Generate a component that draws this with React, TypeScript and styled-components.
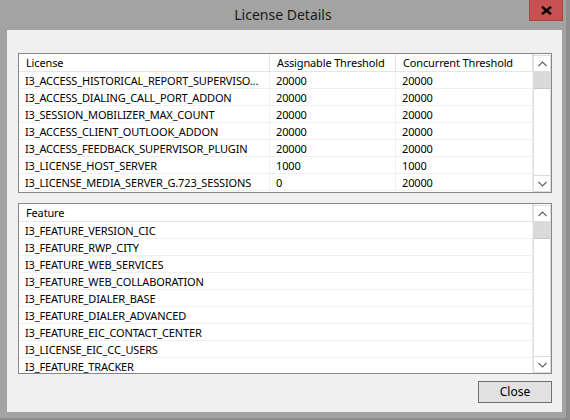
import styled, { createGlobalStyle } from "styled-components";

const GlobalStyle = createGlobalStyle`
    html, body {
        margin: 0;
        padding: 0;
        background: #a3a3a3;
    }
    * {
        box-sizing: border-box;
    }
`;

const Window = styled.div`
    width: 570px;
    height: 420px;
    background: #a3a3a3;
    display: flex;
    flex-direction: column;
    font-family: "Noto Sans", "Open Sans", sans-serif;
    color: #000;
    border-right: 4px solid #8e8e8e;
    border-bottom: 2px solid #8e8e8e;
`;

const TitleBar = styled.div`
    height: 30px;
    display: grid;
    grid-template-columns: 1fr auto 1fr;
    align-items: start;
`;

const Title = styled.div`
    grid-column: 2;
    font-size: 14px;
    line-height: 30px;
    color: #1a1a1a;
`;

const CloseX = styled.div`
    grid-column: 3;
    justify-self: end;
    width: 34px;
    height: 21px;
    margin-right: 3px;
    background: #c75050;
    border: 1px solid #a84040;
    border-top: none;
    display: flex;
    align-items: center;
    justify-content: center;
`;

const Client = styled.div`
    margin-left: 7px;
    width: 555px;
    height: 382px;
    background: #f0f0f0;
    padding: 23px 10px 9px 11px;
    display: flex;
    flex-direction: column;
`;

const ListView = styled.div<{ $height: number }>`
    height: ${(p) => p.$height}px;
    border: 1px solid #828790;
    background: #fff;
    display: grid;
    grid-template-columns: 1fr 18px;
    overflow: hidden;
`;

const Rows = styled.div`
    overflow: hidden;
    font-size: 11px;
    letter-spacing: -0.15px;
`;

const Row = styled.div<{ $cols: string; $header?: boolean }>`
    display: grid;
    grid-template-columns: ${(p) => p.$cols};
    height: ${(p) => (p.$header ? 18 : 17)}px;
    border-bottom: 1px solid ${(p) => (p.$header ? "#e5e5e5" : "#f0f0f0")};
`;

const Cell = styled.div<{ $header?: boolean }>`
    padding-left: ${(p) => (p.$header ? 7 : 6)}px;
    padding-top: 1px;
    line-height: 16px;
    white-space: nowrap;
    overflow: hidden;
    border-right: 1px solid ${(p) => (p.$header ? "#e5e5e5" : "#f0f0f0")};
    color: #000;
`;

const ScrollBar = styled.div`
    display: flex;
    flex-direction: column;
    background: #fff;
    border-left: 1px solid #dcdcdc;
    padding-top: 1px;
`;

const ScrollButton = styled.div`
    height: 17px;
    border: 1px solid #dcdcdc;
    border-left: none;
    display: flex;
    align-items: center;
    justify-content: center;
    background: #fff;
`;

const Track = styled.div`
    flex: 1;
    background: #fff;
    border-right: 1px solid #dcdcdc;
`;

const Thumb = styled.div`
    height: 17px;
    background: #dadada;
    border-bottom: 1px solid #c8c8c8;
`;

const Spacer = styled.div<{ $h: number }>`
    height: ${(p) => p.$h}px;
    flex: none;
`;

const Footer = styled.div`
    display: flex;
    justify-content: flex-end;
`;

const Button = styled.button`
    width: 74px;
    height: 22px;
    border: 1px solid #707070;
    background: #e1e1e1;
    font-family: "Noto Sans", "Open Sans", sans-serif;
    font-size: 12px;
    color: #000;
    padding: 0;
    line-height: 18px;
`;

const Chevron = ({ up }: { up?: boolean }) => (
    <svg width="9" height="6" viewBox="0 0 9 6">
        <polyline
            points={up ? "0.5,5 4.5,1 8.5,5" : "0.5,1 4.5,5 8.5,1"}
            fill="none"
            stroke="#606060"
            strokeWidth="1.1"
        />
    </svg>
);

const Scroll = () => (
    <ScrollBar>
        <ScrollButton>
            <Chevron up />
        </ScrollButton>
        <Track>
            <Thumb />
        </Track>
        <ScrollButton>
            <Chevron />
        </ScrollButton>
    </ScrollBar>
);

const licenses = [
    ["I3_ACCESS_HISTORICAL_REPORT_SUPERVISO...", "20000", "20000"],
    ["I3_ACCESS_DIALING_CALL_PORT_ADDON", "20000", "20000"],
    ["I3_SESSION_MOBILIZER_MAX_COUNT", "20000", "20000"],
    ["I3_ACCESS_CLIENT_OUTLOOK_ADDON", "20000", "20000"],
    ["I3_ACCESS_FEEDBACK_SUPERVISOR_PLUGIN", "20000", "20000"],
    ["I3_LICENSE_HOST_SERVER", "1000", "1000"],
    ["I3_LICENSE_MEDIA_SERVER_G.723_SESSIONS", "0", "20000"],
];

const features = [
    "I3_FEATURE_VERSION_CIC",
    "I3_FEATURE_RWP_CITY",
    "I3_FEATURE_WEB_SERVICES",
    "I3_FEATURE_WEB_COLLABORATION",
    "I3_FEATURE_DIALER_BASE",
    "I3_FEATURE_DIALER_ADVANCED",
    "I3_FEATURE_EIC_CONTACT_CENTER",
    "I3_LICENSE_EIC_CC_USERS",
    "I3_FEATURE_TRACKER",
];

const licenseCols = "251px 126px 1fr";
const featureCols = "1fr";

export default function App() {
    return (
        <>
            <GlobalStyle />
            <Window>
                <TitleBar>
                    <Title>License Details</Title>
                    <CloseX>
                        <svg width="11" height="9" viewBox="0 0 11 9">
                            <path d="M1 0.8 L10 8.2 M10 0.8 L1 8.2" stroke="#000" strokeWidth="2.4" />
                        </svg>
                    </CloseX>
                </TitleBar>
                <Client>
                    <ListView $height={140}>
                        <Rows>
                            <Row $cols={licenseCols} $header>
                                <Cell $header>License</Cell>
                                <Cell $header>Assignable Threshold</Cell>
                                <Cell $header>Concurrent Threshold</Cell>
                            </Row>
                            {licenses.map((l) => (
                                <Row key={l[0]} $cols={licenseCols}>
                                    <Cell>{l[0]}</Cell>
                                    <Cell>{l[1]}</Cell>
                                    <Cell>{l[2]}</Cell>
                                </Row>
                            ))}
                        </Rows>
                        <Scroll />
                    </ListView>
                    <Spacer $h={10} />
                    <ListView $height={171}>
                        <Rows>
                            <Row $cols={featureCols} $header>
                                <Cell $header>Feature</Cell>
                            </Row>
                            {features.map((f) => (
                                <Row key={f} $cols={featureCols}>
                                    <Cell>{f}</Cell>
                                </Row>
                            ))}
                        </Rows>
                        <Scroll />
                    </ListView>
                    <Spacer $h={7} />
                    <Footer>
                        <Button>Close</Button>
                    </Footer>
                </Client>
            </Window>
        </>
    );
}
